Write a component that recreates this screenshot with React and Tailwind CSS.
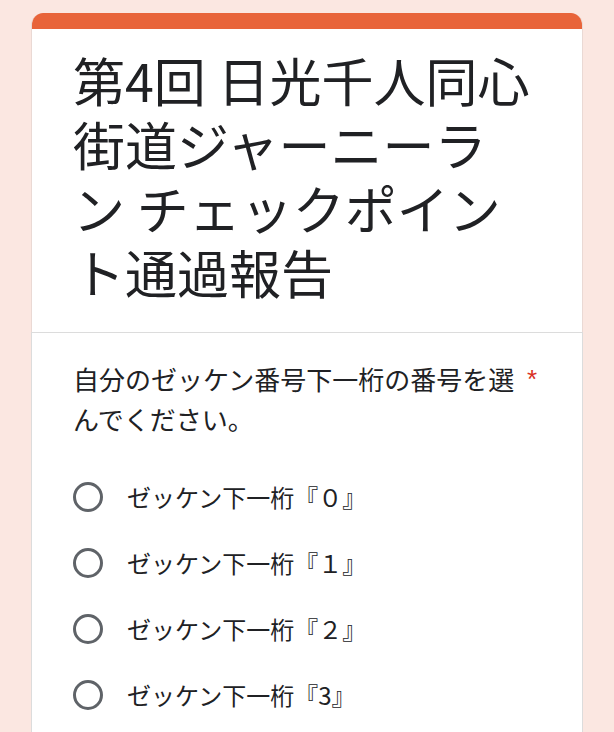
import React from 'react';

const options = ['ゼッケン下一桁『０』', 'ゼッケン下一桁『１』', 'ゼッケン下一桁『２』', 'ゼッケン下一桁『3』'];

const font = { fontFamily: '"Noto Sans CJK JP", "Noto Sans", sans-serif' };

const App = () => {
  return (
    <div className="h-[732px] overflow-hidden bg-[#fbe7e1] pt-[13px]" style={font}>
      <div className="ml-[31px] w-[552px]">
        {/* Title card */}
        <div className="rounded-t-[12px] overflow-hidden bg-white border-x border-[#ead9d4]">
          <div className="h-[16px] bg-[#e8643a]" />
          <h1 className="px-[41px] pt-[19px] pb-[28px] text-[52px] leading-[64px] font-normal text-[#202124]">
            第4回 日光千人同心<br />
            街道ジャーニーラ<br />
            ン チェックポイン<br />
            ト通過報告
          </h1>
        </div>

        {/* Question card */}
        <div className="bg-white border-x border-t border-[#dcdcdc] min-h-[420px] px-[41px] pt-[26px]">
          <div className="flex items-start">
            <p className="w-[452px] text-[26px] leading-[40px] text-[#202124]">
              自分のゼッケン番号下一桁の番号を選んでください。
            </p>
            <span className="ml-[2px] text-[26px] leading-[40px] text-[#d93025]" style={{ fontFamily: '"Liberation Sans", sans-serif' }}>*</span>
          </div>

          <div className="mt-[25px] flex flex-col">
            {options.map((o) => (
              <div key={o} className="flex items-center h-[66px]">
                <div className="w-[30px] h-[30px] rounded-full border-[3px] border-[#5f6368] shrink-0" />
                <span className="ml-[24px] text-[24px] text-[#202124]">{o}</span>
              </div>
            ))}
          </div>
        </div>
      </div>
    </div>
  );
};

export default App;
